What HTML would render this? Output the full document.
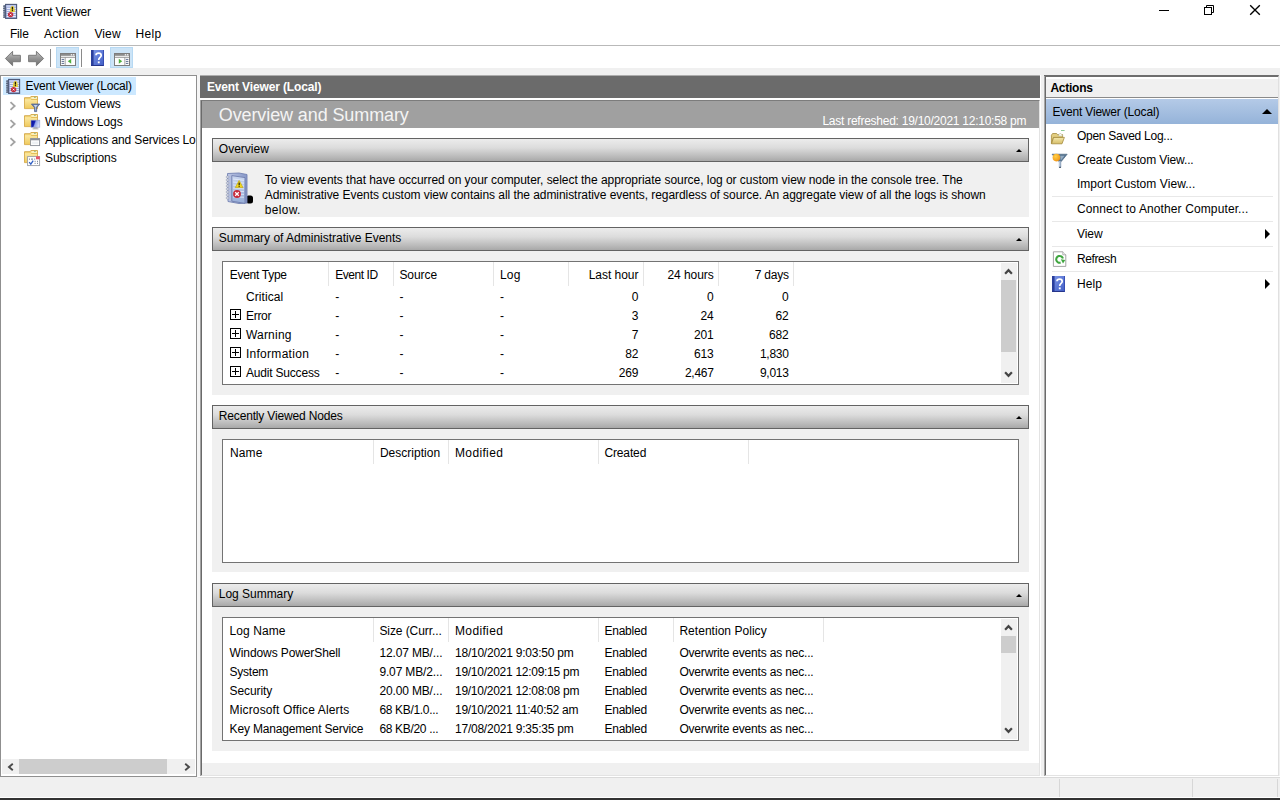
<!DOCTYPE html>
<html><head><meta charset="utf-8"><title>Event Viewer</title>
<style>
html,body{margin:0;padding:0}
body{width:1280px;height:800px;overflow:hidden;position:relative;background:#f0f0f0;font-family:"Liberation Sans",sans-serif;font-size:12px;color:#000}
.a{position:absolute}
.t{position:absolute;white-space:pre;display:block}
svg{position:absolute;overflow:visible}
.hdr{position:absolute;left:212px;width:817px;height:24px;box-sizing:border-box;border:1px solid #636363;background:linear-gradient(#ececec 0%,#dcdcdc 40%,#b6b6b6 85%,#a8a8a8 100%)}
.body{position:absolute;left:212px;width:817px;background:#f0f0f0}
.list{position:absolute;left:222px;width:797px;box-sizing:border-box;border:1px solid #737373;background:#fff}
.sep{position:absolute;width:1px;background:#e5e5e5}
.tri{position:absolute;width:0;height:0;border-left:3px solid transparent;border-right:3px solid transparent;border-bottom:3px solid #000}
.asep{position:absolute;left:1052px;width:221px;height:1px;background:#e8e8e8}
</style></head><body>
<!-- title + menu + toolbar -->
<div class="a" style="left:0;top:0;width:1280px;height:45px;background:#fff"></div>
<div class="a" style="left:0;top:45px;width:1280px;height:1px;background:#b9b9b9"></div>
<div class="a" style="left:0;top:46px;width:1280px;height:22px;background:#fff"></div>
<svg style="left:2px;top:3px" width="17.00" height="17.00" viewBox="0 0 17 17">
<rect x="1.5" y="2.2" width="2.2" height="12.6" fill="#8591a8"/>
<rect x="3.6" y="1.4" width="11" height="14" fill="#a2aedb" stroke="#4c5979" stroke-width="1.1"/>
<rect x="4.4" y="2.2" width="9.4" height="2.2" fill="#c3cdf0"/>
<g stroke="#e8ecfb" stroke-width="1"><path d="M4.8 5.5h9M4.8 7.5h9M4.8 9.5h9M4.8 11.5h9M4.8 13.5h9"/></g>
<rect x="1.1" y="2.6" width="2.6" height="1.25" rx="0.6" fill="#56617c"/><rect x="1.1" y="4.8" width="2.6" height="1.25" rx="0.6" fill="#56617c"/><rect x="1.1" y="7.0" width="2.6" height="1.25" rx="0.6" fill="#56617c"/><rect x="1.1" y="9.2" width="2.6" height="1.25" rx="0.6" fill="#56617c"/><rect x="1.1" y="11.4" width="2.6" height="1.25" rx="0.6" fill="#56617c"/><rect x="1.1" y="13.6" width="2.6" height="1.25" rx="0.6" fill="#56617c"/>
<path d="M7.9 8.9C7.9 5 9 2.7 10.4 2.7C11.8 2.7 12.9 5 12.9 8.9Z" fill="#e2cb3c"/>
<rect x="9.8" y="3.9" width="1.2" height="2.7" fill="#1e1a08"/><rect x="9.8" y="7.1" width="1.2" height="1.1" fill="#1e1a08"/>
<circle cx="8.6" cy="11.6" r="2.7" fill="#c22c3d"/>
<path d="M7.8 10.8l1.6 1.6M9.4 10.8l-1.6 1.6" stroke="#fff" stroke-width="0.9"/>
</svg>
<svg style="left:0;top:46px" width="50" height="22" viewBox="0 46 50 22"><defs><linearGradient id="ag" x1="0" y1="0" x2="0" y2="1"><stop offset="0" stop-color="#c6c6c6"/><stop offset="0.45" stop-color="#989898"/><stop offset="1" stop-color="#6c6c6c"/></linearGradient></defs>
<path d="M5.4 58.5L12.6 51.3V55.3H20.4V61.7H12.6V65.7Z" fill="url(#ag)" stroke="#7b7b7b" stroke-width="1" stroke-linejoin="round"/>
<path d="M43.6 58.5L36.4 51.3V55.3H28.6V61.7H36.4V65.7Z" fill="url(#ag)" stroke="#7b7b7b" stroke-width="1" stroke-linejoin="round"/></svg>
<div class="a" style="left:50px;top:49px;width:1px;height:18px;background:#8a8a8a"></div>
<div class="a" style="left:81px;top:49px;width:1px;height:18px;background:#8a8a8a"></div>
<div class="a" style="left:56px;top:47px;width:23px;height:21px;box-sizing:border-box;background:#cce4f7;border:1px solid #b7d9f3"></div>
<div class="a" style="left:110px;top:47px;width:23px;height:21px;box-sizing:border-box;background:#cce4f7;border:1px solid #b7d9f3"></div>
<svg style="left:60px;top:53px" width="16" height="13" viewBox="0 0 16 13">
<rect x="0.5" y="0.5" width="15" height="12" fill="#ececec" stroke="#7d7d7d" stroke-width="1"/>
<rect x="1" y="1" width="14" height="1.9" fill="#8c8c8c"/><rect x="10.8" y="1.2" width="1.4" height="1.2" fill="#fff"/><rect x="13" y="1.2" width="1.4" height="1.2" fill="#fff"/>
<rect x="1" y="2.9" width="14" height="1" fill="#f4f4f4"/><rect x="1" y="3.9" width="14" height="0.8" fill="#8f8f8f"/>
<rect x="1" y="5" width="3.8" height="7" fill="#fdfdfd"/><g stroke="#5e6f92" stroke-width="1"><path d="M1.6 6.4h2.6M1.6 8.4h2.6M1.6 10.4h2.6"/></g>
<rect x="4.8" y="4.6" width="0.9" height="7.6" fill="#8a8a8a"/>
<rect x="5.7" y="5" width="9.3" height="7" fill="#fdfdfd"/><path d="M11.2 5.8V10.8L7.8 8.3Z" fill="#4fb03e"/>
</svg>
<svg style="left:114px;top:53px" width="16" height="13" viewBox="0 0 16 13">
<rect x="0.5" y="0.5" width="15" height="12" fill="#ececec" stroke="#7d7d7d" stroke-width="1"/>
<rect x="1" y="1" width="14" height="1.9" fill="#8c8c8c"/><rect x="10.8" y="1.2" width="1.4" height="1.2" fill="#fff"/><rect x="13" y="1.2" width="1.4" height="1.2" fill="#fff"/>
<rect x="1" y="2.9" width="14" height="1" fill="#f4f4f4"/><rect x="1" y="3.9" width="14" height="0.8" fill="#8f8f8f"/>
<rect x="11.2" y="5" width="3.8" height="7" fill="#fdfdfd"/><g stroke="#5e6f92" stroke-width="1"><path d="M11.8 6.4h2.6M11.8 8.4h2.6M11.8 10.4h2.6"/></g>
<rect x="10.3" y="4.6" width="0.9" height="7.6" fill="#8a8a8a"/>
<rect x="1" y="5" width="9.3" height="7" fill="#fdfdfd"/><path d="M4.8 5.8V10.8L8.2 8.3Z" fill="#4fb03e"/>
</svg>
<svg style="left:91px;top:50px" width="13" height="16" viewBox="0 0 13 16">
<defs><linearGradient id="hg50" x1="0" y1="0" x2="1" y2="1"><stop offset="0" stop-color="#7f98e8"/><stop offset="1" stop-color="#3f5cc4"/></linearGradient></defs>
<rect x="0" y="0" width="13" height="16" fill="url(#hg50)"/><rect x="0" y="0" width="2.6" height="16" fill="#2b3f9c"/>
<rect x="0" y="15" width="13" height="1" fill="#26358a"/><rect x="12.2" y="0" width="0.8" height="16" fill="#3148ad"/>
<path d="M5 5.2C5 2.6 10.2 2.4 10.2 5.4C10.2 7.4 7.7 7.6 7.7 10" fill="none" stroke="#fff" stroke-width="1.7"/><rect x="6.8" y="11.4" width="1.9" height="1.9" fill="#fff"/>
</svg>
<svg style="left:1150px;top:0" width="130" height="22" viewBox="1150 0 130 22"><g fill="none" stroke="#000" stroke-width="1">
<path d="M1159 10.5h10"/><rect x="1204.5" y="7.5" width="7" height="7"/><path d="M1206.5 7.5V5.5H1213.5V12.5H1211.5"/><path d="M1250.2 5.2l9.6 9.6M1259.8 5.2l-9.6 9.6" stroke-width="1.35"/></g></svg>
<!-- left pane -->
<div class="a" style="left:0;top:75px;width:197px;height:702px;box-sizing:border-box;border:1px solid #8f8f8f;background:#fff"></div>
<div class="a" style="left:3px;top:77px;width:133px;height:18px;background:#cce8ff"></div>
<div class="a" style="left:2px;top:759px;width:193px;height:15px;background:#f0f0f0"></div>
<div class="a" style="left:19px;top:759px;width:148px;height:15px;background:#cdcdcd"></div>
<svg style="left:5px;top:78px" width="17.00" height="17.00" viewBox="0 0 17 17">
<rect x="1.5" y="2.2" width="2.2" height="12.6" fill="#8591a8"/>
<rect x="3.6" y="1.4" width="11" height="14" fill="#a2aedb" stroke="#4c5979" stroke-width="1.1"/>
<rect x="4.4" y="2.2" width="9.4" height="2.2" fill="#c3cdf0"/>
<g stroke="#e8ecfb" stroke-width="1"><path d="M4.8 5.5h9M4.8 7.5h9M4.8 9.5h9M4.8 11.5h9M4.8 13.5h9"/></g>
<rect x="1.1" y="2.6" width="2.6" height="1.25" rx="0.6" fill="#56617c"/><rect x="1.1" y="4.8" width="2.6" height="1.25" rx="0.6" fill="#56617c"/><rect x="1.1" y="7.0" width="2.6" height="1.25" rx="0.6" fill="#56617c"/><rect x="1.1" y="9.2" width="2.6" height="1.25" rx="0.6" fill="#56617c"/><rect x="1.1" y="11.4" width="2.6" height="1.25" rx="0.6" fill="#56617c"/><rect x="1.1" y="13.6" width="2.6" height="1.25" rx="0.6" fill="#56617c"/>
<path d="M7.9 8.9C7.9 5 9 2.7 10.4 2.7C11.8 2.7 12.9 5 12.9 8.9Z" fill="#e2cb3c"/>
<rect x="9.8" y="3.9" width="1.2" height="2.7" fill="#1e1a08"/><rect x="9.8" y="7.1" width="1.2" height="1.1" fill="#1e1a08"/>
<circle cx="8.6" cy="11.6" r="2.7" fill="#c22c3d"/>
<path d="M7.8 10.8l1.6 1.6M9.4 10.8l-1.6 1.6" stroke="#fff" stroke-width="0.9"/>
</svg>
<svg style="left:9px;top:100.5px" width="8" height="10" viewBox="0 0 8 10"><path d="M1.5 1.1L5.7 5L1.5 8.9" fill="none" stroke="#a3a3a3" stroke-width="1.8"/></svg>
<svg style="left:9px;top:118.5px" width="8" height="10" viewBox="0 0 8 10"><path d="M1.5 1.1L5.7 5L1.5 8.9" fill="none" stroke="#a3a3a3" stroke-width="1.8"/></svg>
<svg style="left:9px;top:136.5px" width="8" height="10" viewBox="0 0 8 10"><path d="M1.5 1.1L5.7 5L1.5 8.9" fill="none" stroke="#a3a3a3" stroke-width="1.8"/></svg>
<svg style="left:24px;top:96px" width="17" height="17" viewBox="0 0 17 17">
<defs><linearGradient id="fg96" x1="0" y1="0" x2="0" y2="1"><stop offset="0" stop-color="#fbe8a2"/><stop offset="1" stop-color="#f0cb5f"/></linearGradient></defs>
<path d="M0.5 1.7H6.1L6.9 0.5H13.5V12.6H0.5Z" fill="#f4d674" stroke="#d2a748" stroke-width="0.9"/>
<rect x="7.4" y="1.2" width="5.5" height="1.6" fill="#fff6cf"/>
<rect x="10.1" y="0.9" width="1.6" height="0.9" fill="#7fae7a"/>
<path d="M0.9 3.3H6.4L7.2 4H13.1V12.2H0.9Z" fill="url(#fg96)"/>
<rect x="7.2" y="3.1" width="5.9" height="0.8" fill="#e0b955"/>
<path d="M7.4 8H15.8L12.7 11.8V15.6H10.5V11.8Z" fill="#6a80ab" stroke="#4c5f8a" stroke-width="0.7" stroke-linejoin="round"/><path d="M9.6 8.9H13.6L11.9 11.2V14.6H11.3V11.2Z" fill="#c7d4ea"/>
</svg>
<svg style="left:24px;top:114px" width="17" height="17" viewBox="0 0 17 17">
<defs><linearGradient id="fg114" x1="0" y1="0" x2="0" y2="1"><stop offset="0" stop-color="#fbe8a2"/><stop offset="1" stop-color="#f0cb5f"/></linearGradient></defs>
<path d="M0.5 1.7H6.1L6.9 0.5H13.5V12.6H0.5Z" fill="#f4d674" stroke="#d2a748" stroke-width="0.9"/>
<rect x="7.4" y="1.2" width="5.5" height="1.6" fill="#fff6cf"/>
<rect x="10.1" y="0.9" width="1.6" height="0.9" fill="#7fae7a"/>
<path d="M0.9 3.3H6.4L7.2 4H13.1V12.2H0.9Z" fill="url(#fg114)"/>
<rect x="7.2" y="3.1" width="5.9" height="0.8" fill="#e0b955"/>
<defs><linearGradient id="mg" x1="0" y1="0" x2="1" y2="0.3"><stop offset="0" stop-color="#060c92"/><stop offset="0.45" stop-color="#1522b4"/><stop offset="0.58" stop-color="#8fa2ea"/><stop offset="1" stop-color="#d3dcf8"/></linearGradient></defs>
<rect x="7" y="6.2" width="8.8" height="7" fill="url(#mg)" stroke="#8d9bd0" stroke-width="0.6"/><rect x="9.5" y="13.6" width="4" height="0.9" fill="#8c8c8c"/><rect x="8.5" y="14.5" width="6" height="0.8" fill="#a8a8a8"/>
</svg>
<svg style="left:24px;top:132px" width="17" height="17" viewBox="0 0 17 17">
<defs><linearGradient id="fg132" x1="0" y1="0" x2="0" y2="1"><stop offset="0" stop-color="#fbe8a2"/><stop offset="1" stop-color="#f0cb5f"/></linearGradient></defs>
<path d="M0.5 1.7H6.1L6.9 0.5H13.5V12.6H0.5Z" fill="#f4d674" stroke="#d2a748" stroke-width="0.9"/>
<rect x="7.4" y="1.2" width="5.5" height="1.6" fill="#fff6cf"/>
<rect x="10.1" y="0.9" width="1.6" height="0.9" fill="#7fae7a"/>
<path d="M0.9 3.3H6.4L7.2 4H13.1V12.2H0.9Z" fill="url(#fg132)"/>
<rect x="7.2" y="3.1" width="5.9" height="0.8" fill="#e0b955"/>
<rect x="6.6" y="6.6" width="9" height="7" fill="#fff" stroke="#8a8f99" stroke-width="0.9"/><rect x="6.6" y="6.6" width="9" height="1.7" fill="#8a8f99"/><rect x="8" y="9.6" width="6.2" height="2.6" fill="#eef1f4"/>
</svg>
<svg style="left:24px;top:150px" width="17" height="17" viewBox="0 0 17 17">
<defs><linearGradient id="fg150" x1="0" y1="0" x2="0" y2="1"><stop offset="0" stop-color="#fbe8a2"/><stop offset="1" stop-color="#f0cb5f"/></linearGradient></defs>
<path d="M0.5 1.7H6.1L6.9 0.5H13.5V12.6H0.5Z" fill="#f4d674" stroke="#d2a748" stroke-width="0.9"/>
<rect x="7.4" y="1.2" width="5.5" height="1.6" fill="#fff6cf"/>
<rect x="10.1" y="0.9" width="1.6" height="0.9" fill="#7fae7a"/>
<path d="M0.9 3.3H6.4L7.2 4H13.1V12.2H0.9Z" fill="url(#fg150)"/>
<rect x="7.2" y="3.1" width="5.9" height="0.8" fill="#e0b955"/>
<rect x="3.6" y="6.6" width="12" height="9" fill="#fff" stroke="#9a9ea6" stroke-width="0.9"/><rect x="12" y="6.3" width="3.8" height="3" fill="#e8566a"/>
<g fill="#6a7488"><rect x="5" y="8.6" width="1" height="1"/><rect x="7" y="8.6" width="2" height="1"/><rect x="10.2" y="8.6" width="1" height="1"/><rect x="10.6" y="10.8" width="1" height="1"/><rect x="13" y="10.8" width="1" height="1"/><rect x="10.6" y="12.8" width="1" height="1"/><rect x="13" y="12.8" width="1" height="1"/></g>
<path d="M5.2 12.2L6.8 14.2L9.2 10.6" fill="none" stroke="#2f5fc4" stroke-width="1.3"/>
</svg>
<svg style="left:6.5px;top:763px" width="8" height="8" viewBox="0 0 8 8"><path d="M5.8 0.8L2 4L5.8 7.2" fill="none" stroke="#4a4a4a" stroke-width="1.9"/></svg>
<svg style="left:182.5px;top:763px" width="8" height="8" viewBox="0 0 8 8"><path d="M2.2 0.8L6 4L2.2 7.2" fill="none" stroke="#4a4a4a" stroke-width="1.9"/></svg>
<!-- splitters -->
<div class="a" style="left:197px;top:75px;width:3px;height:702px;background:#f5f5f5"></div>
<div class="a" style="left:1040px;top:75px;width:1px;height:702px;background:#fff"></div>
<!-- center pane -->
<div class="a" style="left:200px;top:75px;width:840px;height:702px;background:#fff"></div>
<div class="a" style="left:200px;top:75px;width:840px;height:1px;background:#adadad"></div>
<div class="a" style="left:200px;top:76px;width:840px;height:22px;background:#6b6b6b"></div>
<div class="a" style="left:200px;top:100px;width:840px;height:676px;box-sizing:border-box;border-left:2px solid #6a6a6a;border-top:1px solid #7c7c7c;border-right:1px solid #e3e3e3;border-bottom:1px solid #e3e3e3;background:#fff"></div>
<div class="a" style="left:202px;top:101px;width:837px;height:27px;background:#a0a0a0"></div>
<div class="a" style="left:202px;top:763px;width:837px;height:12px;background:#f0f0f0"></div>
<div class="a" style="left:198px;top:776px;width:1082px;height:1px;background:#fff"></div>
<!-- sections -->
<div class="hdr" style="top:138px"></div><div class="tri" style="left:1016px;top:149px"></div>
<div class="body" style="top:162px;height:55px"></div>
<div class="hdr" style="top:227px"></div><div class="tri" style="left:1016px;top:238px"></div>
<div class="body" style="top:251px;height:144px"></div>
<div class="list" style="top:261px;height:124px"></div>
<div class="hdr" style="top:405px"></div><div class="tri" style="left:1016px;top:416px"></div>
<div class="body" style="top:429px;height:143px"></div>
<div class="list" style="top:439px;height:124px"></div>
<div class="hdr" style="top:583px"></div><div class="tri" style="left:1016px;top:594px"></div>
<div class="body" style="top:607px;height:144px"></div>
<div class="list" style="top:617px;height:124px"></div>
<div class="sep" style="left:328px;top:262px;height:24px"></div>
<div class="sep" style="left:393px;top:262px;height:24px"></div>
<div class="sep" style="left:493px;top:262px;height:24px"></div>
<div class="sep" style="left:568px;top:262px;height:24px"></div>
<div class="sep" style="left:643px;top:262px;height:24px"></div>
<div class="sep" style="left:718px;top:262px;height:24px"></div>
<div class="sep" style="left:793px;top:262px;height:24px"></div>
<div class="sep" style="left:373px;top:440px;height:24px"></div>
<div class="sep" style="left:448px;top:440px;height:24px"></div>
<div class="sep" style="left:598px;top:440px;height:24px"></div>
<div class="sep" style="left:748px;top:440px;height:24px"></div>
<div class="sep" style="left:373px;top:618px;height:24px"></div>
<div class="sep" style="left:448px;top:618px;height:24px"></div>
<div class="sep" style="left:598px;top:618px;height:24px"></div>
<div class="sep" style="left:673px;top:618px;height:24px"></div>
<div class="sep" style="left:823px;top:618px;height:24px"></div>
<svg style="left:230px;top:309px" width="11" height="11" viewBox="0 0 11 11"><rect x="0.5" y="0.5" width="10" height="10" fill="#fff" stroke="#000"/><path d="M2 5.5h7M5.5 2v7" stroke="#000" stroke-width="1"/></svg>
<svg style="left:230px;top:328px" width="11" height="11" viewBox="0 0 11 11"><rect x="0.5" y="0.5" width="10" height="10" fill="#fff" stroke="#000"/><path d="M2 5.5h7M5.5 2v7" stroke="#000" stroke-width="1"/></svg>
<svg style="left:230px;top:347px" width="11" height="11" viewBox="0 0 11 11"><rect x="0.5" y="0.5" width="10" height="10" fill="#fff" stroke="#000"/><path d="M2 5.5h7M5.5 2v7" stroke="#000" stroke-width="1"/></svg>
<svg style="left:230px;top:366px" width="11" height="11" viewBox="0 0 11 11"><rect x="0.5" y="0.5" width="10" height="10" fill="#fff" stroke="#000"/><path d="M2 5.5h7M5.5 2v7" stroke="#000" stroke-width="1"/></svg><svg style="left:224px;top:170px" width="32" height="36" viewBox="224 170 32 36">
<defs><linearGradient id="bg1" x1="0" y1="0" x2="1" y2="0"><stop offset="0" stop-color="#bcc6e4"/><stop offset="1" stop-color="#8798c8"/></linearGradient>
<linearGradient id="bg2" x1="0" y1="0" x2="0" y2="1"><stop offset="0" stop-color="#c9d6ef"/><stop offset="1" stop-color="#98aed8"/></linearGradient></defs>
<rect x="246" y="195.5" width="7" height="8" rx="2.5" fill="#000"/>
<path d="M227.5 173.5L239 173L247 174.5V203L239 203.5L228 201.5Z" fill="url(#bg1)" stroke="#7482b2" stroke-width="0.9"/>
<path d="M231.8 175.6L245 177.6V203.4L231.8 201.2Z" fill="url(#bg2)" stroke="#6f7eae" stroke-width="0.9"/>
<g stroke="#e6ecfa" stroke-width="0.8"><path d="M233 179l11 1.4M233 182l11 1.2M233 185l11 1M233 188l11 .8M233 191l11 .6M233 194l11 .4M233 197l11 .2"/></g>
<g fill="#e8ecf6" stroke="#8a90aa" stroke-width="0.6"><ellipse cx="227.6" cy="177" rx="1.6" ry="0.9"/><ellipse cx="227.6" cy="180" rx="1.6" ry="0.9"/><ellipse cx="227.6" cy="183" rx="1.6" ry="0.9"/><ellipse cx="227.6" cy="186" rx="1.6" ry="0.9"/><ellipse cx="227.6" cy="189" rx="1.6" ry="0.9"/><ellipse cx="227.6" cy="192" rx="1.6" ry="0.9"/><ellipse cx="227.6" cy="195" rx="1.6" ry="0.9"/><ellipse cx="227.6" cy="198" rx="1.6" ry="0.9"/></g>
<path d="M239.1 180.4L243 187.6H235.3Z" fill="#f2d91c" stroke="#c7a90e" stroke-width="0.7" stroke-linejoin="round"/>
<rect x="238.6" y="182.6" width="1.1" height="2.6" fill="#111"/><rect x="238.6" y="185.8" width="1.1" height="1" fill="#111"/>
<circle cx="237" cy="194" r="3.9" fill="#c72a3b"/><path d="M235.2 192.2l3.6 3.6M238.8 192.2l-3.6 3.6" stroke="#fff" stroke-width="1.3"/>
</svg>
<div class="a" style="left:1001px;top:263px;width:16px;height:120px;background:#f0f0f0"></div><div class="a" style="left:1001px;top:280px;width:15px;height:72px;background:#cdcdcd"></div><svg style="left:1004.1px;top:268px" width="9" height="7" viewBox="0 0 9 7"><path d="M1.1 5.8L4.5 2.2L7.9 5.8" fill="none" stroke="#454545" stroke-width="2.2"/></svg><svg style="left:1004.1px;top:371px" width="9" height="7" viewBox="0 0 9 7"><path d="M1.1 1.2L4.5 4.8L7.9 1.2" fill="none" stroke="#454545" stroke-width="2.2"/></svg><div class="a" style="left:1001px;top:619px;width:16px;height:120px;background:#f0f0f0"></div><div class="a" style="left:1001px;top:636px;width:15px;height:17px;background:#cdcdcd"></div><svg style="left:1004.1px;top:624px" width="9" height="7" viewBox="0 0 9 7"><path d="M1.1 5.8L4.5 2.2L7.9 5.8" fill="none" stroke="#454545" stroke-width="2.2"/></svg><svg style="left:1004.1px;top:727px" width="9" height="7" viewBox="0 0 9 7"><path d="M1.1 1.2L4.5 4.8L7.9 1.2" fill="none" stroke="#454545" stroke-width="2.2"/></svg>
<!-- right pane -->
<div class="a" style="left:1044px;top:75px;width:235px;height:701px;box-sizing:border-box;border-left:2px solid #6a6a6a;border-top:2px solid #6e6e6e;border-right:1px solid #e0e0e0;border-bottom:1px solid #e3e3e3;background:#fff"></div>
<div class="a" style="left:1046px;top:79px;width:232px;height:18px;background:#f0f0f0"></div>
<div class="a" style="left:1046px;top:97px;width:232px;height:1px;background:#8a8a8a"></div>
<div class="a" style="left:1046px;top:99px;width:232px;height:25px;background:linear-gradient(#b4cae7,#95b3d9)"></div>
<div class="a" style="left:1262px;top:109px;width:0;height:0;border-left:5px solid transparent;border-right:5px solid transparent;border-bottom:5px solid #000"></div>
<div class="asep" style="top:196px"></div><div class="asep" style="top:221px"></div><div class="asep" style="top:246px"></div><div class="asep" style="top:271px"></div>
<div class="a" style="left:1265px;top:229px;width:0;height:0;border-top:5px solid transparent;border-bottom:5px solid transparent;border-left:5px solid #000"></div>
<div class="a" style="left:1265px;top:279px;width:0;height:0;border-top:5px solid transparent;border-bottom:5px solid transparent;border-left:5px solid #000"></div>
<svg style="left:1050px;top:129px" width="17" height="17" viewBox="1050 129 17 17">
<defs><linearGradient id="of" x1="0" y1="0" x2="0" y2="1"><stop offset="0" stop-color="#f4e8ae"/><stop offset="1" stop-color="#d6be68"/></linearGradient></defs>
<rect x="1061" y="130" width="3.6" height="0.9" fill="#7fc48a"/>
<path d="M1051.4 143.6V135.2L1052.6 133.5H1056.6L1057.6 134.6H1062.6V137.5H1053.4Z" fill="#e2cd80" stroke="#a58a3c" stroke-width="0.8" stroke-linejoin="round"/>
<path d="M1058.6 134.8L1060 133.2L1062.3 134.8V136H1058.6Z" fill="#fbfbf4" stroke="#a9a98c" stroke-width="0.45"/>
<path d="M1053.6 137.4H1064.4L1062 143.8H1051.5Z" fill="url(#of)" stroke="#a58a3c" stroke-width="0.8" stroke-linejoin="round"/>
</svg>
<svg style="left:1051px;top:153px" width="18" height="16" viewBox="1051 153 18 16">
<defs><radialGradient id="og" cx="0.4" cy="0.35" r="0.7"><stop offset="0" stop-color="#ffd047"/><stop offset="1" stop-color="#f09314"/></radialGradient>
<linearGradient id="sg" x1="0" y1="0" x2="1" y2="0"><stop offset="0" stop-color="#e4ebf4"/><stop offset="1" stop-color="#8098b4"/></linearGradient></defs>
<path d="M1052 154.2H1067.2L1061.2 161.6H1058.4Z" fill="#55738e" stroke="#44607a" stroke-width="0.6"/>
<path d="M1060.2 155.8H1064.6L1060.8 160.4Z" fill="#93abc3"/>
<rect x="1058.4" y="161.2" width="2.8" height="6.2" fill="url(#sg)"/><rect x="1059" y="166.8" width="2" height="1" fill="#36475b"/>
<circle cx="1056.4" cy="157.6" r="3.8" fill="url(#og)"/>
</svg>
<svg style="left:1052px;top:251px" width="15" height="17" viewBox="1052 251 15 17">
<path d="M1053.4 251.8H1062.8L1065.8 254.8V266.4H1053.4Z" fill="#fff" stroke="#9a9a9a" stroke-width="0.9"/>
<path d="M1062.8 251.8V254.8H1065.8" fill="#f1f1f1" stroke="#9a9a9a" stroke-width="0.7"/>
<path d="M1062.9 258.6A3.4 3.4 0 1 0 1060.6 262.6" fill="none" stroke="#3fa63f" stroke-width="2.1"/>
<path d="M1060.8 259.3L1065.3 259.9L1063 263.6Z" fill="#3fa63f"/>
</svg>
<svg style="left:1052px;top:276px" width="13" height="16" viewBox="0 0 13 16">
<defs><linearGradient id="hg276" x1="0" y1="0" x2="1" y2="1"><stop offset="0" stop-color="#7f98e8"/><stop offset="1" stop-color="#3f5cc4"/></linearGradient></defs>
<rect x="0" y="0" width="13" height="16" fill="url(#hg276)"/><rect x="0" y="0" width="2.6" height="16" fill="#2b3f9c"/>
<rect x="0" y="15" width="13" height="1" fill="#26358a"/><rect x="12.2" y="0" width="0.8" height="16" fill="#3148ad"/>
<path d="M5 5.2C5 2.6 10.2 2.4 10.2 5.4C10.2 7.4 7.7 7.6 7.7 10" fill="none" stroke="#fff" stroke-width="1.7"/><rect x="6.8" y="11.4" width="1.9" height="1.9" fill="#fff"/>
</svg>
<div class="a" style="left:200px;top:100px;width:1px;height:676px;background:#a2a2a2"></div>
<div class="a" style="left:1044px;top:76px;width:1px;height:700px;background:#a8a8a8"></div>
<!-- status bar -->
<div class="a" style="left:0;top:777px;width:1280px;height:20px;background:#f0f0f0"></div>
<div class="a" style="left:198px;top:777px;width:1082px;height:1px;background:#dadada"></div>
<div class="a" style="left:0;top:797px;width:1280px;height:1px;background:#fff"></div>
<div class="a" style="left:1277px;top:779px;width:1px;height:18px;background:#d7d7d7"></div>
<div class="a" style="left:1059px;top:779px;width:1px;height:18px;background:#d7d7d7"></div>
<div class="a" style="left:1192px;top:779px;width:1px;height:18px;background:#d7d7d7"></div>
<div class="a" style="left:0;top:798px;width:1280px;height:2px;background:#333"></div>
<span class="t" style="left:22.90px;top:5.34px;font-size:12px;line-height:15px;letter-spacing:-0.224px;">Event Viewer</span>
<span class="t" style="left:9.90px;top:27.34px;font-size:12px;line-height:15px;letter-spacing:-0.136px;">File</span>
<span class="t" style="left:43.90px;top:27.34px;font-size:12px;line-height:15px;letter-spacing:0.323px;">Action</span>
<span class="t" style="left:94.40px;top:27.34px;font-size:12px;line-height:15px;letter-spacing:0.126px;">View</span>
<span class="t" style="left:135.40px;top:27.34px;font-size:12px;line-height:15px;letter-spacing:0.403px;">Help</span>
<span class="t" style="left:25.40px;top:79.34px;font-size:12px;line-height:15px;letter-spacing:-0.210px;">Event Viewer (Local)</span>
<span class="t" style="left:44.90px;top:97.34px;font-size:12px;line-height:15px;letter-spacing:-0.057px;">Custom Views</span>
<span class="t" style="left:44.90px;top:115.34px;font-size:12px;line-height:15px;letter-spacing:-0.021px;">Windows Logs</span>
<span class="t" style="left:44.90px;top:133.34px;font-size:12px;line-height:15px;letter-spacing:-0.118px;">Applications and Services Lo</span>
<span class="t" style="left:44.90px;top:151.34px;font-size:12px;line-height:15px;letter-spacing:-0.019px;">Subscriptions</span>
<span class="t" style="left:206.90px;top:80.34px;font-size:12px;line-height:15px;font-weight:700;color:#fff;letter-spacing:-0.138px;">Event Viewer (Local)</span>
<span class="t" style="left:218.80px;top:103.76px;font-size:18px;line-height:22px;color:#f4f4f4;letter-spacing:-0.108px;">Overview and Summary</span>
<span class="t" style="left:822.40px;top:114.34px;font-size:12px;line-height:15px;color:#fff;letter-spacing:-0.253px;">Last refreshed: 19/10/2021 12:10:58 pm</span>
<span class="t" style="left:218.80px;top:142.34px;font-size:12px;line-height:15px;letter-spacing:0.011px;">Overview</span>
<span class="t" style="left:218.80px;top:231.34px;font-size:12px;line-height:15px;letter-spacing:-0.007px;">Summary of Administrative Events</span>
<span class="t" style="left:218.80px;top:409.34px;font-size:12px;line-height:15px;letter-spacing:-0.166px;">Recently Viewed Nodes</span>
<span class="t" style="left:218.80px;top:587.34px;font-size:12px;line-height:15px;letter-spacing:-0.028px;">Log Summary</span>
<span class="t" style="left:264.70px;top:173.34px;font-size:12px;line-height:15px;letter-spacing:-0.042px;">To view events that have occurred on your computer, select the appropriate source, log or custom view node in the console tree. The</span>
<span class="t" style="left:264.70px;top:188.34px;font-size:12px;line-height:15px;letter-spacing:-0.058px;">Administrative Events custom view contains all the administrative events, regardless of source. An aggregate view of all the logs is shown</span>
<span class="t" style="left:264.70px;top:203.34px;font-size:12px;line-height:15px;letter-spacing:0.328px;">below.</span>
<span class="t" style="left:229.70px;top:268.34px;font-size:12px;line-height:15px;letter-spacing:-0.283px;">Event Type</span>
<span class="t" style="left:335.20px;top:268.34px;font-size:12px;line-height:15px;letter-spacing:-0.441px;">Event ID</span>
<span class="t" style="left:399.40px;top:268.34px;font-size:12px;line-height:15px;letter-spacing:-0.072px;">Source</span>
<span class="t" style="left:499.90px;top:268.34px;font-size:12px;line-height:15px;letter-spacing:0.256px;">Log</span>
<span class="t" style="left:588.70px;top:268.34px;font-size:12px;line-height:15px;letter-spacing:-0.039px;">Last hour</span>
<span class="t" style="left:667.40px;top:268.34px;font-size:12px;line-height:15px;letter-spacing:-0.050px;">24 hours</span>
<span class="t" style="left:754.70px;top:268.34px;font-size:12px;line-height:15px;letter-spacing:-0.227px;">7 days</span>
<span class="t" style="left:245.90px;top:290.34px;font-size:12px;line-height:15px;letter-spacing:0.091px;">Critical</span>
<span class="t" style="left:335.20px;top:290.34px;font-size:12px;line-height:15px;letter-spacing:0.900px;">-</span>
<span class="t" style="left:399.40px;top:290.34px;font-size:12px;line-height:15px;letter-spacing:0.900px;">-</span>
<span class="t" style="left:499.90px;top:290.34px;font-size:12px;line-height:15px;letter-spacing:0.900px;">-</span>
<span class="t" style="left:631.63px;top:290.34px;font-size:12px;line-height:15px;letter-spacing:0.083px;">0</span>
<span class="t" style="left:706.93px;top:290.34px;font-size:12px;line-height:15px;letter-spacing:0.083px;">0</span>
<span class="t" style="left:781.93px;top:290.34px;font-size:12px;line-height:15px;letter-spacing:0.083px;">0</span>
<span class="t" style="left:245.90px;top:309.34px;font-size:12px;line-height:15px;letter-spacing:-0.254px;">Error</span>
<span class="t" style="left:335.20px;top:309.34px;font-size:12px;line-height:15px;letter-spacing:0.900px;">-</span>
<span class="t" style="left:399.40px;top:309.34px;font-size:12px;line-height:15px;letter-spacing:0.900px;">-</span>
<span class="t" style="left:499.90px;top:309.34px;font-size:12px;line-height:15px;letter-spacing:0.900px;">-</span>
<span class="t" style="left:631.63px;top:309.34px;font-size:12px;line-height:15px;letter-spacing:0.083px;">3</span>
<span class="t" style="left:700.46px;top:309.34px;font-size:12px;line-height:15px;letter-spacing:-0.060px;">24</span>
<span class="t" style="left:775.46px;top:309.34px;font-size:12px;line-height:15px;letter-spacing:-0.060px;">62</span>
<span class="t" style="left:245.90px;top:328.34px;font-size:12px;line-height:15px;letter-spacing:0.221px;">Warning</span>
<span class="t" style="left:335.20px;top:328.34px;font-size:12px;line-height:15px;letter-spacing:0.900px;">-</span>
<span class="t" style="left:399.40px;top:328.34px;font-size:12px;line-height:15px;letter-spacing:0.900px;">-</span>
<span class="t" style="left:499.90px;top:328.34px;font-size:12px;line-height:15px;letter-spacing:0.900px;">-</span>
<span class="t" style="left:631.63px;top:328.34px;font-size:12px;line-height:15px;letter-spacing:0.083px;">7</span>
<span class="t" style="left:693.99px;top:328.34px;font-size:12px;line-height:15px;letter-spacing:-0.107px;">201</span>
<span class="t" style="left:768.99px;top:328.34px;font-size:12px;line-height:15px;letter-spacing:-0.107px;">682</span>
<span class="t" style="left:245.90px;top:347.34px;font-size:12px;line-height:15px;letter-spacing:0.288px;">Information</span>
<span class="t" style="left:335.20px;top:347.34px;font-size:12px;line-height:15px;letter-spacing:0.900px;">-</span>
<span class="t" style="left:399.40px;top:347.34px;font-size:12px;line-height:15px;letter-spacing:0.900px;">-</span>
<span class="t" style="left:499.90px;top:347.34px;font-size:12px;line-height:15px;letter-spacing:0.900px;">-</span>
<span class="t" style="left:625.16px;top:347.34px;font-size:12px;line-height:15px;letter-spacing:-0.060px;">82</span>
<span class="t" style="left:693.99px;top:347.34px;font-size:12px;line-height:15px;letter-spacing:-0.107px;">613</span>
<span class="t" style="left:759.92px;top:347.34px;font-size:12px;line-height:15px;letter-spacing:-0.250px;">1,830</span>
<span class="t" style="left:245.90px;top:366.34px;font-size:12px;line-height:15px;letter-spacing:-0.181px;">Audit Success</span>
<span class="t" style="left:335.20px;top:366.34px;font-size:12px;line-height:15px;letter-spacing:0.900px;">-</span>
<span class="t" style="left:399.40px;top:366.34px;font-size:12px;line-height:15px;letter-spacing:0.900px;">-</span>
<span class="t" style="left:499.90px;top:366.34px;font-size:12px;line-height:15px;letter-spacing:0.900px;">-</span>
<span class="t" style="left:618.69px;top:366.34px;font-size:12px;line-height:15px;letter-spacing:-0.107px;">269</span>
<span class="t" style="left:684.92px;top:366.34px;font-size:12px;line-height:15px;letter-spacing:-0.250px;">2,467</span>
<span class="t" style="left:759.92px;top:366.34px;font-size:12px;line-height:15px;letter-spacing:-0.250px;">9,013</span>
<span class="t" style="left:229.90px;top:446.34px;font-size:12px;line-height:15px;letter-spacing:0.196px;">Name</span>
<span class="t" style="left:379.90px;top:446.34px;font-size:12px;line-height:15px;letter-spacing:0.024px;">Description</span>
<span class="t" style="left:455.00px;top:446.34px;font-size:12px;line-height:15px;letter-spacing:0.355px;">Modified</span>
<span class="t" style="left:604.40px;top:446.34px;font-size:12px;line-height:15px;letter-spacing:-0.129px;">Created</span>
<span class="t" style="left:229.60px;top:624.34px;font-size:12px;line-height:15px;letter-spacing:0.066px;">Log Name</span>
<span class="t" style="left:379.40px;top:624.34px;font-size:12px;line-height:15px;letter-spacing:-0.081px;">Size (Curr...</span>
<span class="t" style="left:455.00px;top:624.34px;font-size:12px;line-height:15px;letter-spacing:0.355px;">Modified</span>
<span class="t" style="left:604.40px;top:624.34px;font-size:12px;line-height:15px;letter-spacing:-0.214px;">Enabled</span>
<span class="t" style="left:679.40px;top:624.34px;font-size:12px;line-height:15px;letter-spacing:0.036px;">Retention Policy</span>
<span class="t" style="left:229.60px;top:646.34px;font-size:12px;line-height:15px;letter-spacing:-0.107px;">Windows PowerShell</span>
<span class="t" style="left:379.40px;top:646.34px;font-size:12px;line-height:15px;letter-spacing:-0.142px;">12.07 MB/...</span>
<span class="t" style="left:455.00px;top:646.34px;font-size:12px;line-height:15px;letter-spacing:-0.235px;">18/10/2021 9:03:50 pm</span>
<span class="t" style="left:604.40px;top:646.34px;font-size:12px;line-height:15px;letter-spacing:-0.214px;">Enabled</span>
<span class="t" style="left:679.40px;top:646.34px;font-size:12px;line-height:15px;letter-spacing:-0.178px;">Overwrite events as nec...</span>
<span class="t" style="left:229.60px;top:665.34px;font-size:12px;line-height:15px;letter-spacing:-0.253px;">System</span>
<span class="t" style="left:379.40px;top:665.34px;font-size:12px;line-height:15px;letter-spacing:-0.142px;">9.07 MB/2...</span>
<span class="t" style="left:455.00px;top:665.34px;font-size:12px;line-height:15px;letter-spacing:-0.273px;">19/10/2021 12:09:15 pm</span>
<span class="t" style="left:604.40px;top:665.34px;font-size:12px;line-height:15px;letter-spacing:-0.214px;">Enabled</span>
<span class="t" style="left:679.40px;top:665.34px;font-size:12px;line-height:15px;letter-spacing:-0.178px;">Overwrite events as nec...</span>
<span class="t" style="left:229.60px;top:684.34px;font-size:12px;line-height:15px;letter-spacing:-0.082px;">Security</span>
<span class="t" style="left:379.40px;top:684.34px;font-size:12px;line-height:15px;letter-spacing:-0.142px;">20.00 MB/...</span>
<span class="t" style="left:455.00px;top:684.34px;font-size:12px;line-height:15px;letter-spacing:-0.273px;">19/10/2021 12:08:08 pm</span>
<span class="t" style="left:604.40px;top:684.34px;font-size:12px;line-height:15px;letter-spacing:-0.214px;">Enabled</span>
<span class="t" style="left:679.40px;top:684.34px;font-size:12px;line-height:15px;letter-spacing:-0.178px;">Overwrite events as nec...</span>
<span class="t" style="left:229.60px;top:703.34px;font-size:12px;line-height:15px;letter-spacing:0.140px;">Microsoft Office Alerts</span>
<span class="t" style="left:379.40px;top:703.34px;font-size:12px;line-height:15px;letter-spacing:-0.327px;">68 KB/1.0...</span>
<span class="t" style="left:455.00px;top:703.34px;font-size:12px;line-height:15px;letter-spacing:-0.274px;">19/10/2021 11:40:52 am</span>
<span class="t" style="left:604.40px;top:703.34px;font-size:12px;line-height:15px;letter-spacing:-0.214px;">Enabled</span>
<span class="t" style="left:679.40px;top:703.34px;font-size:12px;line-height:15px;letter-spacing:-0.178px;">Overwrite events as nec...</span>
<span class="t" style="left:229.60px;top:722.34px;font-size:12px;line-height:15px;letter-spacing:-0.168px;">Key Management Service</span>
<span class="t" style="left:379.40px;top:722.34px;font-size:12px;line-height:15px;letter-spacing:-0.327px;">68 KB/20 ...</span>
<span class="t" style="left:455.00px;top:722.34px;font-size:12px;line-height:15px;letter-spacing:-0.235px;">17/08/2021 9:35:35 pm</span>
<span class="t" style="left:604.40px;top:722.34px;font-size:12px;line-height:15px;letter-spacing:-0.214px;">Enabled</span>
<span class="t" style="left:679.40px;top:722.34px;font-size:12px;line-height:15px;letter-spacing:-0.178px;">Overwrite events as nec...</span>
<span class="t" style="left:1050.40px;top:81.34px;font-size:12px;line-height:15px;font-weight:700;letter-spacing:-0.245px;">Actions</span>
<span class="t" style="left:1052.40px;top:105.34px;font-size:12px;line-height:15px;letter-spacing:-0.185px;">Event Viewer (Local)</span>
<span class="t" style="left:1076.90px;top:129.34px;font-size:12px;line-height:15px;letter-spacing:-0.258px;">Open Saved Log...</span>
<span class="t" style="left:1076.90px;top:153.34px;font-size:12px;line-height:15px;letter-spacing:-0.118px;">Create Custom View...</span>
<span class="t" style="left:1076.90px;top:177.34px;font-size:12px;line-height:15px;letter-spacing:0.064px;">Import Custom View...</span>
<span class="t" style="left:1076.90px;top:202.34px;font-size:12px;line-height:15px;letter-spacing:0.116px;">Connect to Another Computer...</span>
<span class="t" style="left:1076.90px;top:227.34px;font-size:12px;line-height:15px;letter-spacing:-0.024px;">View</span>
<span class="t" style="left:1076.90px;top:252.34px;font-size:12px;line-height:15px;letter-spacing:-0.376px;">Refresh</span>
<span class="t" style="left:1076.90px;top:277.34px;font-size:12px;line-height:15px;letter-spacing:0.153px;">Help</span>
</body></html>
